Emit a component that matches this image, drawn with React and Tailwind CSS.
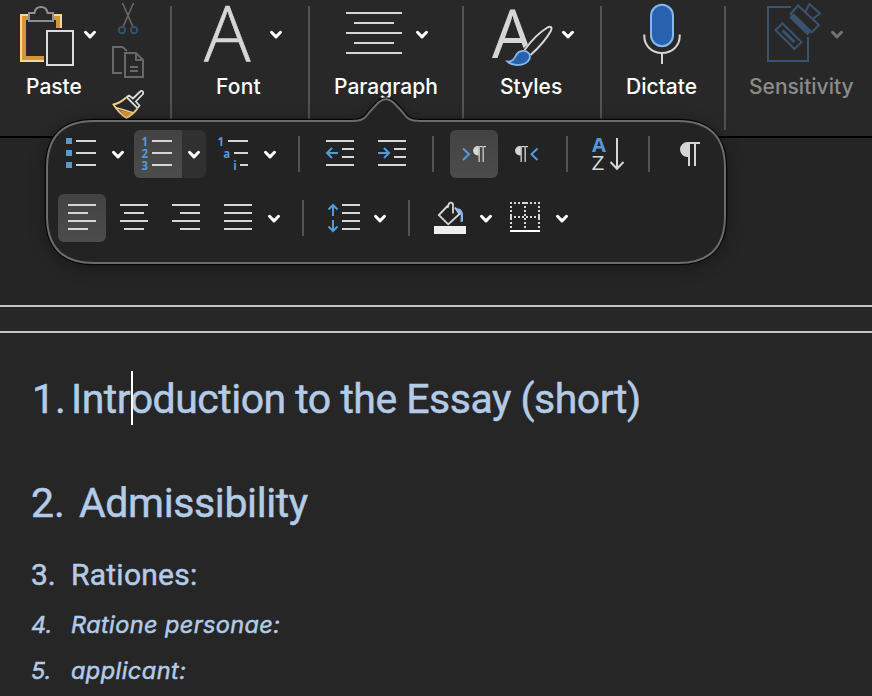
import React from "react";

const LIGHT = "#d6d6d6";
const BLUE = "#5599dd";
const MUTED_BLUE = "#3a546f";

function Chevron({ color = "#ffffff" }) {
  return (
    <svg width="24" height="48" viewBox="0 0 24 48" fill="none" className="block shrink-0">
      <path d="M7.500 22.300 12 26.900 16.500 22.300" stroke={color} strokeWidth="3" strokeLinecap="round" strokeLinejoin="round" />
    </svg>
  );
}

/* ---------- ribbon icons ---------- */

function PasteIcon() {
  return (
    <svg width="54" height="66" viewBox="20 2 54 66" fill="none" className="block">
      <path d="M44 59H23V17H59V28" stroke="#d9943a" strokeWidth="6" />
      <path d="M44 61H21V15H61V28" stroke="#f6d98f" strokeWidth="2" />
      <path d="M29 21V13H34.500C35 9 37.500 7 41 7S47 9 47.500 13H53V21Z" fill="#282828" stroke="#8f8f8f" strokeWidth="2" />
      <rect x="44" y="28" width="32" height="40" fill="#282828" />
      <rect x="47" y="31" width="26" height="34" stroke="#dcdcdc" strokeWidth="2" />
    </svg>
  );
}

function ScissorsIcon() {
  return (
    <svg width="32" height="34" viewBox="112 2 32 34" fill="none" className="block">
      <path d="M122.500 3 133 27M133.500 3 123 27" stroke="#686868" strokeWidth="1.600" />
      <circle cx="122" cy="30" r="3.200" stroke="#34516f" strokeWidth="2" />
      <circle cx="134" cy="30" r="3.200" stroke="#34516f" strokeWidth="2" />
    </svg>
  );
}

function CopyIcon() {
  return (
    <svg width="32" height="34" viewBox="112 45 32 34" fill="none" className="block">
      <path d="M122 73H113V47H122.500L127 51" stroke="#686868" strokeWidth="2" />
      <path d="M125 53H136L143 60V77H125ZM136 53V60H143M130 67H138M130 71H138" stroke="#686868" strokeWidth="2" />
    </svg>
  );
}

function BrushIcon() {
  return (
    <svg width="32" height="32" viewBox="112 88 32 32" fill="none" className="block">
      <path d="M119 110 134.500 113.500 126.500 118Z" fill="#d9943a" />
      <path d="M126 97.500C122 101.500 118 103.500 113.500 104.500C117 110 121 114.500 126.500 118C131 115.500 135 112 137.500 108.500M115.500 107.500 134 113" stroke="#f0cf87" strokeWidth="1.800" />
      <path d="M126.500 97 137.500 108.200" stroke="#dcdcdc" strokeWidth="1.800" />
      <path d="M126.500 97 129 95.500 133 98.500 140.200 91.500C141.300 90.400 142.300 90.800 143 91.700S143.400 93.500 142.500 94.500L135.800 101.500 139.500 105.500 137.500 108.200" stroke="#dcdcdc" strokeWidth="1.800" strokeLinejoin="round" />
    </svg>
  );
}

function FontIcon() {
  return (
    <svg width="48" height="66" viewBox="203 2 48 66" className="block overflow-visible">
      <text x="204" y="62" fontSize="77.500" fontWeight="300" textLength="46.500" lengthAdjust="spacingAndGlyphs" fill={LIGHT} stroke={LIGHT} strokeWidth="0.600" className="font-['Open_Sans',sans-serif]">A</text>
    </svg>
  );
}

function ParagraphIcon() {
  return (
    <svg width="56" height="66" viewBox="346 2 56 66" fill="none" className="block">
      <path d="M346 13H402M354 23H394M346 33H402M354 43H394M346 53H402" stroke={LIGHT} strokeWidth="2" />
    </svg>
  );
}

function StylesIcon() {
  return (
    <svg width="62" height="66" viewBox="491 2 62 66" fill="none" className="block overflow-visible">
      <text x="492" y="58" fontSize="67" textLength="41" lengthAdjust="spacingAndGlyphs" fill={LIGHT} className="font-['Open_Sans',sans-serif]">A</text>
      <path d="M520.500 51 529 43.500 534 36 546 25 556 26 530 68H505L506 59 516 54Z" fill="#282828" />
      <path d="M524.500 50C531 41 540 32 547.500 27.500C551 25.800 552.500 27.500 550.800 31C547 38 539 47.500 530.500 55" stroke={LIGHT} strokeWidth="2" />
      <path d="M507.500 61.500C513 62 514.500 58 516.500 54.500C519 50.300 525.500 49.600 528.500 53C531.500 56.500 529.500 61 525 63.500C519.500 66 511.500 65.500 507.500 61.500Z" fill="#2862ae" stroke="#86b8ed" strokeWidth="1.800" />
    </svg>
  );
}

function MicIcon() {
  return (
    <svg width="40" height="66" viewBox="642 2 40 66" fill="none" className="block">
      <rect x="651" y="4.700" width="22" height="41.600" rx="11" fill="#2862ae" stroke="#86b8ed" strokeWidth="2" />
      <path d="M644.300 34.500V36C644.300 46 652 53 662 53S679.700 46 679.700 36V34.500M662 53V64" stroke={LIGHT} strokeWidth="2" />
    </svg>
  );
}

function SensitivityIcon() {
  return (
    <svg width="56" height="66" viewBox="766 2 56 66" fill="none" className="block">
      <g stroke={MUTED_BLUE} strokeWidth="2">
        <path d="M791 7H768V61H808V37" />
        <path d="M782.500 23.500 801.500 42 794.500 49 775.500 30Z" />
        <path d="M782.500 30.500 794.500 42" strokeWidth="3" />
        <path d="M790.500 14 798 5.500 819 25 811.500 32.500Z" />
        <path d="M791.500 15.500 809.500 33" strokeWidth="6" />
        <path d="M805.500 11.500 809.500 4 820 13.500 812.500 19" />
      </g>
    </svg>
  );
}

/* ---------- ribbon ---------- */

function RibbonGroup({ children, label, className, labelClass, dim, chevron = true }) {
  return (
    <div className={"flex h-full shrink-0 flex-col pt-0.5 " + className}>
      <div className="flex h-[66px] items-start">
        {children}
        {chevron && (
          <div className="mt-2 ml-1">
            <Chevron color={dim ? "#727272" : "#ffffff"} />
          </div>
        )}
      </div>
      <div className={"flex h-[37px] items-center text-[21px] leading-none font-medium whitespace-nowrap " + (dim ? "text-[#8b8b8b] " : "text-white ") + labelClass}>
        {label}
      </div>
    </div>
  );
}

function RibbonRule() {
  return <div className="mt-1.5 h-[124px] w-0.5 shrink-0 bg-[#535353]" />;
}

function Ribbon() {
  return (
    <header className="flex h-[138px] border-b-2 border-black bg-[#282828]">
      <RibbonGroup label="Paste" className="w-28 pl-5" labelClass="pl-1.5">
        <PasteIcon />
      </RibbonGroup>
      <div className="flex w-[58px] shrink-0 flex-col pt-0.5">
        <ScissorsIcon />
        <div className="mt-[9px]"><CopyIcon /></div>
        <div className="mt-[9px]"><BrushIcon /></div>
      </div>
      <RibbonRule />
      <RibbonGroup label="Font" className="w-[136px] pl-[31px]" labelClass="pl-[13px] tracking-[0.2px]">
        <div className="pr-[9px]"><FontIcon /></div>
      </RibbonGroup>
      <RibbonRule />
      <RibbonGroup label="Paragraph" className="w-[152px] pl-6" labelClass="">
        <div className="pr-1 pl-3"><ParagraphIcon /></div>
      </RibbonGroup>
      <RibbonRule />
      <RibbonGroup label="Styles" className="w-[136px] pl-[27px]" labelClass="pl-[9px]">
        <div className="-mr-px"><StylesIcon /></div>
      </RibbonGroup>
      <RibbonRule />
      <RibbonGroup label="Dictate" className="w-[122px] pl-6" labelClass="" chevron={false}>
        <div className="pl-4"><MicIcon /></div>
      </RibbonGroup>
      <RibbonRule />
      <RibbonGroup label="Sensitivity" className="pl-[23px]" labelClass="" dim>
        <div className="-mr-px pl-[17px]"><SensitivityIcon /></div>
      </RibbonGroup>
    </header>
  );
}

/* ---------- popover tools ---------- */

function Tool({ active, children, joined }) {
  return (
    <button
      className={
        "block size-12 shrink-0 " +
        (active ? "bg-linear-to-b from-[#434343] to-[#4c4c4c] " : "") +
        (joined ? "rounded-l-md" : "rounded-md")
      }
    >
      <svg width="48" height="48" viewBox="0 0 48 48" fill="none" className="block font-['Open_Sans',sans-serif]">
        {children}
      </svg>
    </button>
  );
}

function Lines({ d }) {
  return <path d={d} stroke={LIGHT} strokeWidth="2" />;
}

function Blue({ d }) {
  return <path d={d} stroke={BLUE} strokeWidth="2" />;
}

function Mark({ x, y, children }) {
  return (
    <text x={x} y={y} fontSize="11.500" fontWeight="700" textAnchor="middle" fill={BLUE}>
      {children}
    </text>
  );
}

function SmallPilcrow({ x }) {
  return (
    <g transform={"translate(" + x + " 16)"}>
      <path d="M6.500 0H5.300A4.700 4.700 0 0 0 5.300 9.500H6.500Z" fill={LIGHT} />
      <path d="M5 .6H13.500" stroke={LIGHT} strokeWidth="1.200" />
      <path d="M6.700 0V16M10.700 0V16" stroke="#b5b5b5" strokeWidth="1.600" />
    </g>
  );
}

function Rule() {
  return <div className="mx-3 h-9 w-0.5 shrink-0 bg-[#535353]" />;
}

function Popover() {
  const outline =
    "M94 121H352C366 121 366 115.500 370 111.500L377.500 103.500C383 98 389 98 394.500 103.500L402 111.500C406 115.500 406 121 420 121H678C710 121 725 138 725 168V216C725 246 710 263 678 263H94C62 263 47 246 47 216V168C47 138 62 121 94 121Z";
  return (
    <div className="absolute top-[90px] left-10 h-[184px] w-[700px]">
      <svg width="700" height="184" viewBox="40 90 700 184" className="absolute inset-0 drop-shadow-[0_3px_8px_rgba(0,0,0,0.35)]">
        <path d={outline} fill="#232323" stroke="#050505" strokeWidth="4.500" />
        <path d={outline} fill="#232323" stroke="#6c6c6c" strokeWidth="2" />
      </svg>
      <div className="relative flex flex-col gap-4 pt-10 pl-[18px]">
        <div className="flex items-center gap-1">
          <div className="flex">
            <Tool>
              <path d="M8 8h6v6H8zM8 20h6v6H8zM8 32h6v6H8z" fill={BLUE} />
              <Lines d="M18 11H38M18 23H38M18 35H38" />
            </Tool>
            <Chevron />
          </div>
          <div className="flex">
            <Tool active joined>
              <Mark x="10.700" y="16">1</Mark>
              <Mark x="10.700" y="28">2</Mark>
              <Mark x="10.700" y="40.200">3</Mark>
              <Lines d="M18 11H38M18 23H38M18 35H38" />
            </Tool>
            <div className="rounded-r-md bg-[#303030]"><Chevron /></div>
          </div>
          <div className="flex">
            <Tool>
              <Mark x="10.700" y="16">1</Mark>
              <Mark x="16.700" y="28">a</Mark>
              <Mark x="25" y="40.200">i</Mark>
              <Lines d="M18 11H38M24 23H38M30 35H38" />
            </Tool>
            <Chevron />
          </div>
          <Rule />
          <Tool>
            <Lines d="M10 11H38M26 19H38M26 27H38M10 35H38" />
            <Blue d="M22 23H11.500M16 18 11 23 16 28" />
          </Tool>
          <Tool>
            <Lines d="M10 11H38M26 19H38M26 27H38M10 35H38" />
            <Blue d="M10 23H20.500M16 18 21 23 16 28" />
          </Tool>
          <Rule />
          <Tool active>
            <Blue d="M13 18.500 19 24.300 13 30" />
            <SmallPilcrow x={22.5} />
          </Tool>
          <Tool>
            <SmallPilcrow x={12.5} />
            <Blue d="M35.500 18.500 29.500 24.300 35.500 30" />
          </Tool>
          <Rule />
          <Tool>
            <text x="15" y="22" fontSize="19.500" fontWeight="700" textAnchor="middle" textLength="14" lengthAdjust="spacingAndGlyphs" fill={BLUE}>A</text>
            <text x="14" y="40" fontSize="20" fontWeight="500" textAnchor="middle" textLength="13" lengthAdjust="spacingAndGlyphs" fill={LIGHT}>Z</text>
            <Lines d="M33 8V38.500M26.500 32 33 38.700 39.500 32" />
          </Tool>
          <Rule />
          <Tool>
            <path d="M24 12H21.500A7.500 7.500 0 0 0 21.500 27H24Z" fill={LIGHT} />
            <Lines d="M21 13H34M23 12V36M29 12V36" />
          </Tool>
        </div>

        <div className="flex items-center gap-1">
          <Tool active><Lines d="M10 11H38M10 19H30M10 27H38M10 35H30" /></Tool>
          <Tool><Lines d="M10 11H38M14 19H34M10 27H38M14 35H34" /></Tool>
          <Tool><Lines d="M10 11H38M18 19H38M10 27H38M18 35H38" /></Tool>
          <div className="flex">
            <Tool><Lines d="M10 11H38M10 19H38M10 27H38M10 35H38" /></Tool>
            <Chevron />
          </div>
          <Rule />
          <div className="flex">
            <Tool>
              <Blue d="M13 22V11.500M8.500 15.500 13 11 17.500 15.500M13 26V36.500M8.500 32.500 13 37 17.500 32.500" />
              <Lines d="M22 11H40M22 19H40M22 27H40M22 35H40" />
            </Tool>
            <Chevron />
          </div>
          <Rule />
          <div className="flex">
            <Tool>
              <path d="M22 11.500 12.800 21 22.200 30.300 33.500 20 29 13.500M27 19.500V11C27 8 23 8 22.700 10.500L21.500 14" stroke={LIGHT} strokeWidth="1.800" />
              <path d="M29.500 14.500C34 13.500 37 16.500 37 21V27.500L34.500 28 34.800 21Z" fill="#86b8ed" />
              <path d="M8 32h32v8H8z" fill="#eeeeee" />
            </Tool>
            <Chevron />
          </div>
          <div className="flex">
            <Tool>
              <path d="M8 9H38M8 23H38M9 8V34M37 8V34M23 8V34" stroke={LIGHT} strokeWidth="2" strokeDasharray="2 2" />
              <path d="M8 37H38" stroke="#ffffff" strokeWidth="2" />
            </Tool>
            <Chevron />
          </div>
        </div>
      </div>
    </div>
  );
}

/* ---------- document ---------- */

function Document() {
  return (
    <main className="font-['Roboto',sans-serif] text-[#b3cbe7] [-webkit-text-stroke:0.5px_#b3cbe7]">
      <div className="h-[167px] bg-[#252525]" />
      <div className="h-7 border-y-2 border-[#c6c4c6] bg-[#272727]" />
      <div className="pt-[38px] pl-[31px]">
        <h1 className="relative flex h-[54px] items-center pt-1 text-[41px] whitespace-nowrap">
          <span className="w-10 shrink-0 pl-px">1.</span>
          <span className="tracking-[-0.5px]">Introduction to the Essay (short)</span>
          <span className="absolute top-0 left-[100px] h-[54px] w-0.5 bg-white" />
        </h1>
        <h1 className="mt-[50px] flex h-[54px] items-center pt-1 text-[41px] whitespace-nowrap">
          <span className="w-12 shrink-0">2.</span>
          <span className="tracking-[-0.38px]">Admissibility</span>
        </h1>
        <h2 className="mt-[25px] flex h-10 items-center text-[30px] whitespace-nowrap">
          <span className="w-10 shrink-0">3.</span>
          <span className="tracking-[0.25px]">Rationes:</span>
        </h2>
        <h3 className="mt-2.5 flex h-10 items-center pt-0.5 font-['Inter',sans-serif] text-[23.5px] italic whitespace-nowrap">
          <span className="w-10 shrink-0">4.</span>
          <span className="tracking-[0.4px]">Ratione personae:</span>
        </h3>
        <h3 className="mt-1.5 flex h-10 items-center pt-0.5 font-['Inter',sans-serif] text-[23.5px] italic whitespace-nowrap">
          <span className="w-10 shrink-0">5.</span>
          <span className="tracking-[0.45px]">applicant:</span>
        </h3>
      </div>
    </main>
  );
}

export default function App() {
  return (
    <div className="relative h-[696px] w-[872px] overflow-hidden bg-[#262626] font-['Inter',sans-serif]">
      <Ribbon />
      <Document />
      <Popover />
    </div>
  );
}
